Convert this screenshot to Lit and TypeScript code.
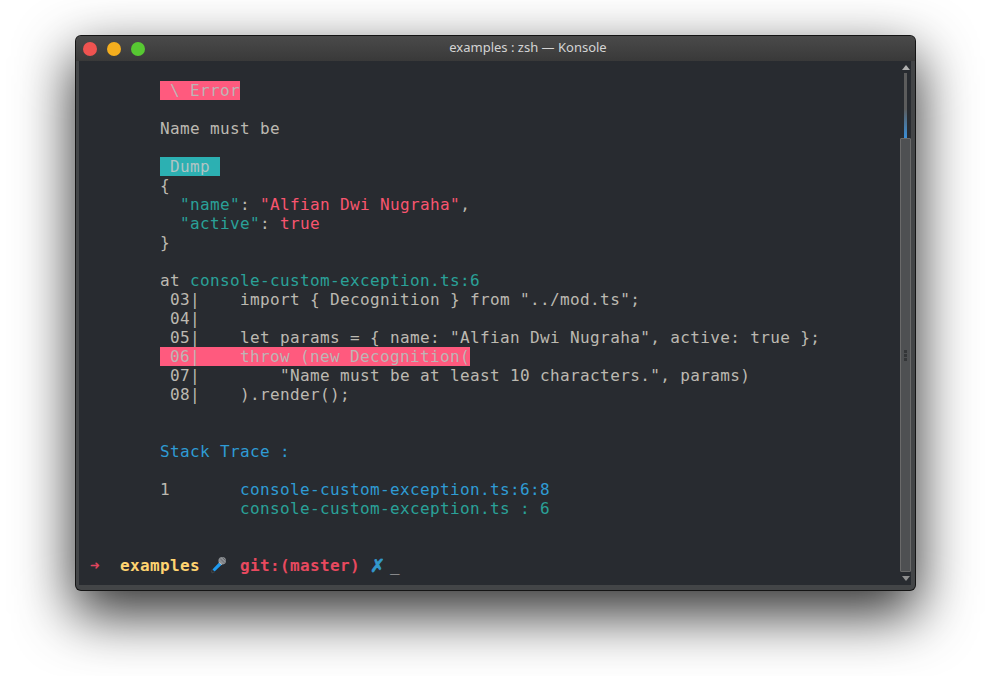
import { LitElement, html, css } from "lit";
import { customElement } from "lit/decorators.js";

const mic = html`<svg class="mic" viewBox="0 0 16 19" width="16" height="19" aria-hidden="true">
  <path d="M2.4 13.4 L9.8 5.8 L12.2 8.2 L4.6 15.6 Z" fill="#1f9bf0"/>
  <path d="M2.4 13.6 L1.4 15.8 L2.4 16.8 L4.6 15.8" stroke="#3d4247" stroke-width="1.1" fill="none"/>
  <circle cx="12.2" cy="4.8" r="3.8" fill="#8d9094"/>
  <path d="M10.2 2.6 L14.4 6.8 M12.4 1.4 L15.6 4.6 M8.8 4.8 L12 8" stroke="#5a5d61" stroke-width=".8"/>
  <path d="M9.2 5.8 L12 8.6" stroke="#cfd2d4" stroke-width="1"/>
</svg>`;

@customElement("app-root")
export class AppRoot extends LitElement {
  static styles = css`
    :host {
      display: block;
      background: #fff;
      height: 676px;
      padding: 36px 76px 0 76px;
      box-sizing: border-box;
      overflow: hidden;
    }
    .window {
      width: 839px;
      height: 554px;
      border-radius: 5px;
      background: #434547;
      box-shadow: 0 0 0 1px #141414, 0 22px 56px 3px rgba(0, 0, 0, 0.8);
      display: flex;
      flex-direction: column;
      overflow: hidden;
    }
    .titlebar {
      height: 25px;
      flex: none;
      display: flex;
      align-items: center;
      padding: 0 4px 4px 7px;
      box-sizing: border-box;
      background: linear-gradient(#4a4a4a, #393939);
    }
    .lights { display: flex; gap: 10px; margin-top: 4px; }
    .light { width: 14px; height: 14px; border-radius: 50%; }
    .red { background: #ef5350; }
    .yellow { background: #f4ae1e; }
    .green { background: #57c832; }
    .title {
      flex: 1;
      text-align: center;
      font: 13px "Noto Sans", sans-serif;
      color: #d4d4d4;
    }
    .body {
      flex: 1;
      display: flex;
      min-height: 0;
      margin: 0 4px 5px 3px;
      background: #282b30;
    }
    .term {
      flex: 1;
      min-width: 0;
      padding: 1px 0 0 1px;
      font: 16px/19px "DejaVu Sans Mono", monospace;
      letter-spacing: 0.37px;
      color: #bcb9b1;
    }
    .line { height: 19px; white-space: pre; display: flex; }
    .line > span { height: 19px; }
    .indent { width: 80px; flex: none; }
    .tag-err { background: #ff5a7e; color: #bdb5b5; width: 80px; padding-left: 10px; box-sizing: border-box; }
    .tag-dump { background: #2cb0b2; color: #b0c4c4; width: 60px; padding-left: 10px; box-sizing: border-box; }
    .hl { display: block; height: 19px; background: #ff5a7e; color: #bdb5b5; }
    .k { color: #2aa198; }
    .s { color: #f9556f; }
    .b { color: #2f9bd4; }
    .prompt { font-weight: 700; }
    .arrow { color: #e0455f; margin-left: 10px; width: 30px; }
    .dir { color: #ffd470; width: 90px; }
    .micwrap { width: 30px; display: flex; }
    .git { color: #e8495f; width: 130px; }
    .x { color: #3399cc; width: 20px; font-family: "DejaVu Sans", sans-serif; font-size: 18px; -webkit-text-stroke: 0.7px #3399cc; }
    .cursor { color: #c8c8c8; font-weight: 400; }
    .scroll {
      width: 11px;
      flex: none;
      display: flex;
      flex-direction: column;
      align-items: center;
      box-sizing: border-box;
      padding: 4px 0 4px 0;
    }
    .arrow-up, .arrow-down { width: 0; height: 0; border-left: 4px solid transparent; border-right: 4px solid transparent; flex: none; }
    .arrow-up { border-bottom: 5px solid #b0b0b0; }
    .arrow-down { border-top: 5px solid #8f8f8f; margin-top: 4px; }
    .track {
      width: 3px;
      height: 65px;
      flex: none;
      margin-top: 3px;
      background: linear-gradient(#5c5c5c 0%, #5c5c5c 55%, #3b8fd8 100%);
    }
    .thumb {
      flex: 1;
      width: 11px;
      background: #4e5052;
      border: 1px solid #6a6a6a;
      border-radius: 1px;
      box-sizing: border-box;
      display: flex;
      flex-direction: column;
      align-items: center;
      justify-content: center;
      gap: 1px;
    }
    .dot { width: 3px; height: 3px; background: #343638; }
  `;

  render() {
    const blank = html`<div class="line"></div>`;
    const l = (c: unknown) => html`<div class="line"><span class="indent"></span><span>${c}</span></div>`;
    return html`<div class="window">
      <div class="titlebar">
        <div class="lights">
          <span class="light red"></span><span class="light yellow"></span><span class="light green"></span>
        </div>
        <div class="title">examples : zsh — Konsole</div>
      </div>
      <div class="body">
        <div class="term">
          ${blank}
          <div class="line"><span class="indent"></span><span class="tag-err">\\ Error</span></div>
          ${blank}
          ${l("Name must be")}
          ${blank}
          <div class="line"><span class="indent"></span><span class="tag-dump">Dump</span></div>
          ${l("{")}
          ${l(html`  <span class="k">"name"</span>: <span class="s">"Alfian Dwi Nugraha"</span>,`)}
          ${l(html`  <span class="k">"active"</span>: <span class="s">true</span>`)}
          ${l("}")}
          ${blank}
          ${l(html`at <span class="k">console-custom-exception.ts:6</span>`)}
          ${l(` 03|    import { Decognition } from "../mod.ts";`)}
          ${l(` 04|`)}
          ${l(` 05|    let params = { name: "Alfian Dwi Nugraha", active: true };`)}
          ${l(html`<span class="hl"> 06|    throw (new Decognition(</span>`)}
          ${l(` 07|        "Name must be at least 10 characters.", params)`)}
          ${l(` 08|    ).render();`)}
          ${blank}${blank}
          ${l(html`<span class="b">Stack Trace :</span>`)}
          ${blank}
          ${l(html`1       <span class="b">console-custom-exception.ts:6:8</span>`)}
          ${l(html`        <span class="k">console-custom-exception.ts : 6</span>`)}
          ${blank}${blank}
          <div class="line prompt">
            <span class="arrow">➜</span><span class="dir">examples</span><span class="micwrap">${mic}</span><span class="git">git:(master)</span><span class="x">✗</span><span class="cursor">_</span>
          </div>
        </div>
        <div class="scroll">
          <div class="arrow-up"></div>
          <div class="track"></div>
          <div class="thumb"><span class="dot"></span><span class="dot"></span><span class="dot"></span></div>
          <div class="arrow-down"></div>
        </div>
      </div>
    </div>`;
  }
}
